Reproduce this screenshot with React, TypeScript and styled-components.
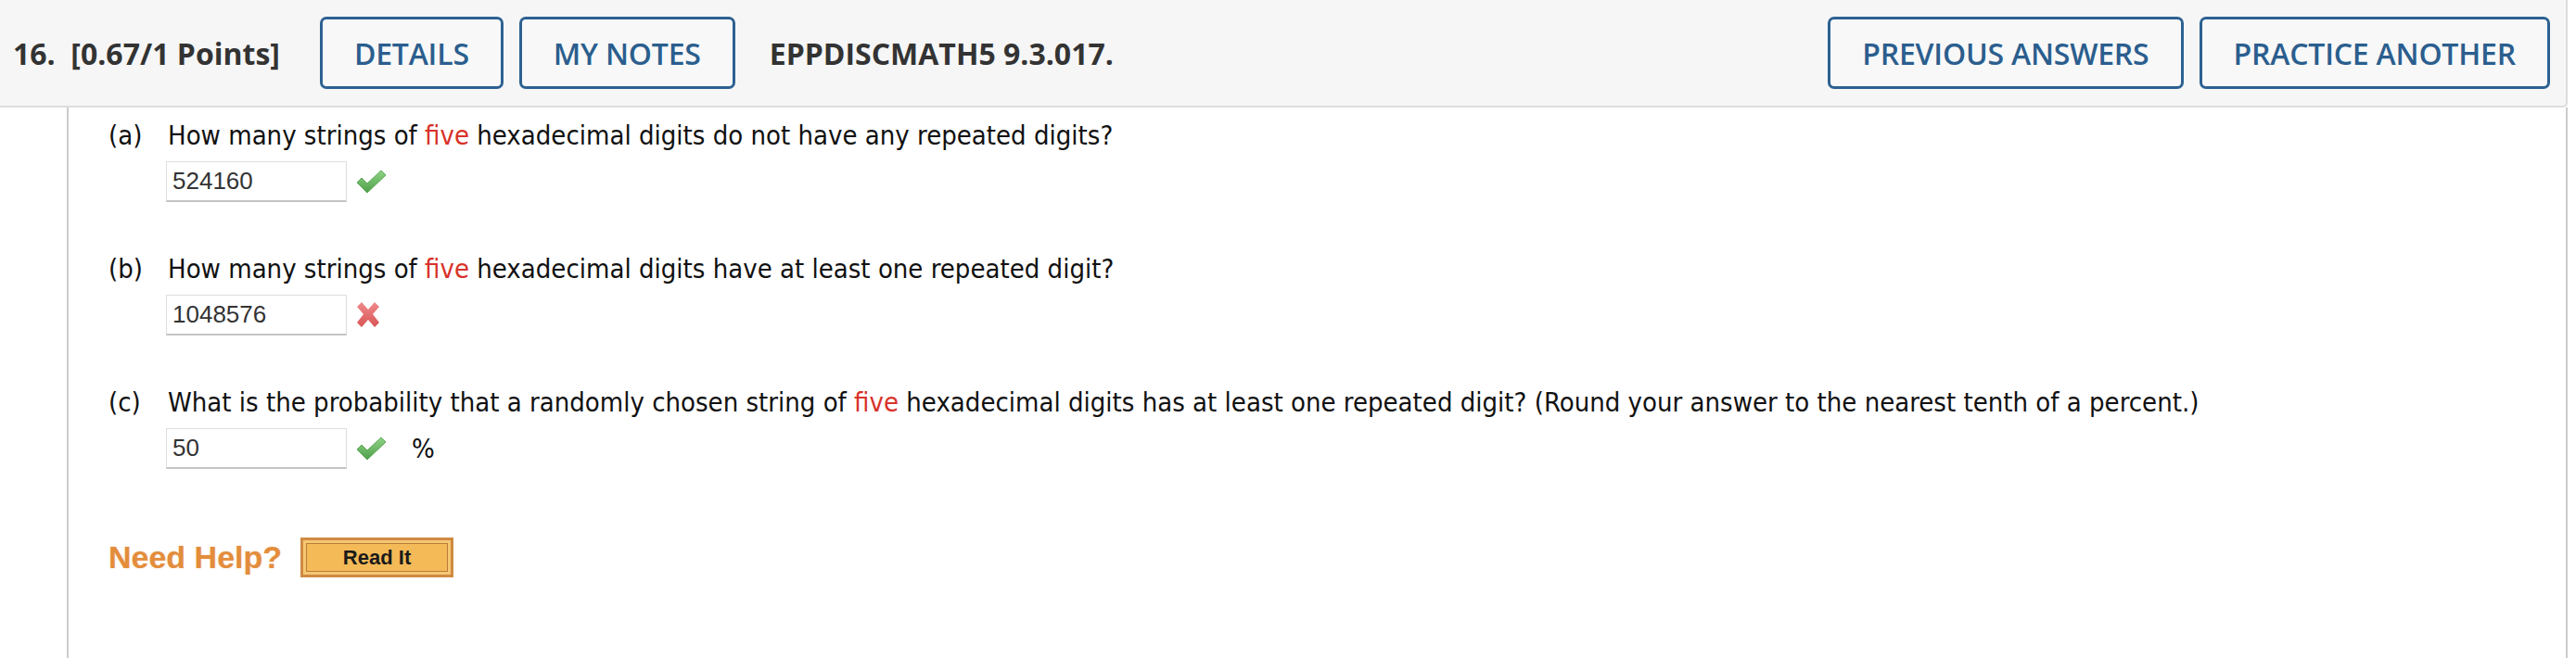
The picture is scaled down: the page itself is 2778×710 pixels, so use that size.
import React from "react";
import styled, { createGlobalStyle } from "styled-components";

const GlobalStyle = createGlobalStyle`
  html, body { margin: 0; padding: 0; background: #ffffff; }
  body { font-family: "DejaVu Sans", sans-serif; }
`;

const Page = styled.div`
  width: 2769px;
  height: 710px;
  display: flex;
  flex-direction: column;
`;

const Header = styled.header`
  height: 114px;
  flex: none;
  display: flex;
  align-items: center;
  padding: 0 17px 0 14px;
  background: #f6f6f6;
  border-bottom: 2px solid #dddddd;
  border-right: 2px solid #dddddd;
  border-bottom-right-radius: 5px;
  font-family: "Open Sans", sans-serif;
`;

const Title = styled.div`
  font-size: 32px;
  font-weight: 700;
  color: #333333;
  white-space: pre;
  margin-right: 43px;
`;

const Code = styled.div`
  font-size: 32px;
  font-weight: 700;
  color: #333333;
  margin-left: 37px;
`;

const ButtonGroup = styled.div<{ $push?: boolean }>`
  display: flex;
  gap: 17px;
  margin-left: ${(p) => (p.$push ? "auto" : "0")};
`;

const OutlineButton = styled.button`
  height: 78px;
  padding: 0 34px;
  box-sizing: border-box;
  border: 3px solid #2d6192;
  border-radius: 7px;
  background: #f8f8f8;
  color: #2b5e8e;
  font-family: "Open Sans", sans-serif;
  font-size: 32px;
  font-weight: 600;
  letter-spacing: -0.2px;
  cursor: pointer;
`;

const Body = styled.main`
  flex: 1;
  display: flex;
  flex-direction: column;
  margin-left: 72px;
  border-left: 2px solid #cccccc;
  border-right: 2px solid #cccccc;
  padding: 12px 0 0 43px;
`;

const Part = styled.section`
  display: flex;
  flex-direction: column;
  margin-bottom: 54px;
`;

const Question = styled.div`
  display: flex;
  font-family: "DejaVu Sans Condensed", "DejaVu Sans", sans-serif;
  font-size: 29px;
  line-height: 36px;
  color: #111111;
`;

const Label = styled.span`
  width: 64px;
  flex: none;
`;

const Red = styled.span`
  color: #d8322a;
`;

const AnswerRow = styled.div`
  display: flex;
  align-items: center;
  margin: 10px 0 0 62px;
  gap: 8px;
`;

const AnswerBox = styled.div`
  width: 195px;
  height: 44px;
  box-sizing: border-box;
  border: 1px solid #dedede;
  border-bottom: 2px solid #c4c4c4;
  padding-left: 6px;
  display: flex;
  align-items: center;
  font-family: "Liberation Sans", Arial, sans-serif;
  font-size: 26px;
  color: #333333;
`;

const Unit = styled.span`
  margin-left: 18px;
  font-family: "DejaVu Sans Condensed", "DejaVu Sans", sans-serif;
  font-size: 29px;
  color: #111111;
`;

const HelpRow = styled.div`
  display: flex;
  align-items: center;
  margin-top: 20px;
  gap: 20px;
`;

const HelpText = styled.span`
  font-family: "Liberation Sans", Arial, sans-serif;
  font-weight: 700;
  font-size: 34px;
  color: #e38d3c;
  text-shadow: 0 0 2px rgba(224, 137, 58, 0.35);
`;

const ReadButton = styled.button`
  width: 165px;
  height: 43px;
  box-sizing: border-box;
  border: 3px solid #cf8a42;
  background: #f4ba58;
  box-shadow: inset 0 0 0 3px #f6c773, inset 0 0 0 4px #b97b37;
  font-family: "Liberation Sans", Arial, sans-serif;
  font-weight: 700;
  font-size: 22px;
  color: #1a1a1a;
  padding: 0;
  cursor: pointer;
`;

const CheckIcon = () => (
  <svg width="36" height="30" viewBox="0 0 36 30">
    <defs>
      <linearGradient id="gchk" x1="0" y1="0" x2="0" y2="1">
        <stop offset="0" stopColor="#8fd486" />
        <stop offset="1" stopColor="#4f9f4a" />
      </linearGradient>
    </defs>
    <path
      d="M3 16 L8 11 L14 17 L29 3 L34 8 L14 27 Z"
      fill="url(#gchk)"
      stroke="#5aa854"
      strokeWidth="1"
      strokeLinejoin="round"
    />
  </svg>
);

const CrossIcon = () => (
  <svg width="30" height="32" viewBox="0 0 30 32">
    <defs>
      <linearGradient id="gx" x1="0" y1="0" x2="0" y2="1">
        <stop offset="0" stopColor="#f08a8a" />
        <stop offset="1" stopColor="#d95555" />
      </linearGradient>
    </defs>
    <path
      d="M3 7 L8 2 L15 10 L22 2 L27 7 L20 15 L27 24 L22 29 L15 21 L8 29 L3 24 L10 15 Z"
      fill="url(#gx)"
      strokeLinejoin="round"
    />
  </svg>
);

type PartData = {
  label: string;
  before: string;
  after: string;
  answer: string;
  correct: boolean;
  unit?: string;
};

const parts: PartData[] = [
  {
    label: "(a)",
    before: "How many strings of ",
    after: " hexadecimal digits do not have any repeated digits?",
    answer: "524160",
    correct: true,
  },
  {
    label: "(b)",
    before: "How many strings of ",
    after: " hexadecimal digits have at least one repeated digit?",
    answer: "1048576",
    correct: false,
  },
  {
    label: "(c)",
    before: "What is the probability that a randomly chosen string of ",
    after:
      " hexadecimal digits has at least one repeated digit? (Round your answer to the nearest tenth of a percent.)",
    answer: "50",
    correct: true,
    unit: "%",
  },
];

export default function App() {
  return (
    <>
      <GlobalStyle />
      <Page>
        <Header>
          <Title>{"16.  [0.67/1 Points]"}</Title>
          <ButtonGroup>
            <OutlineButton>DETAILS</OutlineButton>
            <OutlineButton>MY NOTES</OutlineButton>
          </ButtonGroup>
          <Code>EPPDISCMATH5 9.3.017.</Code>
          <ButtonGroup $push>
            <OutlineButton>PREVIOUS ANSWERS</OutlineButton>
            <OutlineButton>PRACTICE ANOTHER</OutlineButton>
          </ButtonGroup>
        </Header>
        <Body>
          {parts.map((p) => (
            <Part key={p.label}>
              <Question>
                <Label>{p.label}</Label>
                <span>
                  {p.before}
                  <Red>five</Red>
                  {p.after}
                </span>
              </Question>
              <AnswerRow>
                <AnswerBox>{p.answer}</AnswerBox>
                {p.correct ? <CheckIcon /> : <CrossIcon />}
                {p.unit && <Unit>{p.unit}</Unit>}
              </AnswerRow>
            </Part>
          ))}
          <HelpRow>
            <HelpText>Need Help?</HelpText>
            <ReadButton>Read It</ReadButton>
          </HelpRow>
        </Body>
      </Page>
    </>
  );
}
